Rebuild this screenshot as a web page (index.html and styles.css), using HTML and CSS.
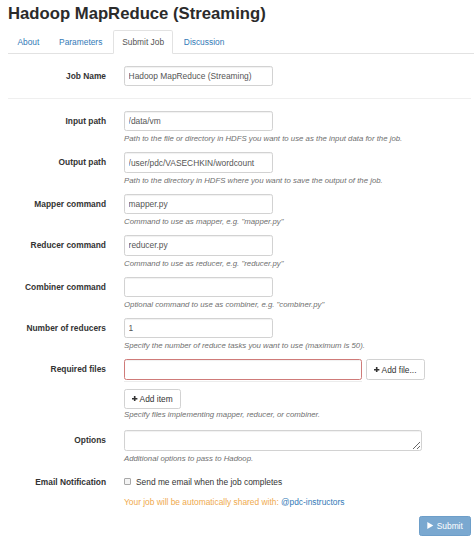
FILE: index.html
```
<!DOCTYPE html>
<html>
<head>
<meta charset="utf-8">
<link rel="stylesheet" href="styles.css">
</head>
<body>
<div class="page">
  <h1 class="title">Hadoop MapReduce (Streaming)</h1>
  <nav class="tabs">
    <a class="tab">About</a>
    <a class="tab">Parameters</a>
    <a class="tab active">Submit Job</a>
    <a class="tab">Discussion</a>
  </nav>
  <form class="form">
    <div class="group">
      <label class="label">Job Name</label>
      <div class="field"><input class="input" type="text" value="Hadoop MapReduce (Streaming)"></div>
    </div>
    <hr class="sep">
    <div class="group">
      <label class="label">Input path</label>
      <div class="field">
        <input class="input" type="text" value="/data/vm">
        <p class="help">Path to the file or directory in HDFS you want to use as the input data for the job.</p>
      </div>
    </div>
    <div class="group">
      <label class="label">Output path</label>
      <div class="field">
        <input class="input" type="text" value="/user/pdc/VASECHKIN/wordcount">
        <p class="help">Path to the directory in HDFS where you want to save the output of the job.</p>
      </div>
    </div>
    <div class="group">
      <label class="label">Mapper command</label>
      <div class="field">
        <input class="input" type="text" value="mapper.py">
        <p class="help">Command to use as mapper, e.g. "mapper.py"</p>
      </div>
    </div>
    <div class="group">
      <label class="label">Reducer command</label>
      <div class="field">
        <input class="input" type="text" value="reducer.py">
        <p class="help">Command to use as reducer, e.g. "reducer.py"</p>
      </div>
    </div>
    <div class="group">
      <label class="label">Combiner command</label>
      <div class="field">
        <input class="input" type="text" value="">
        <p class="help">Optional command to use as combiner, e.g. "combiner.py"</p>
      </div>
    </div>
    <div class="group">
      <label class="label">Number of reducers</label>
      <div class="field">
        <input class="input" type="text" value="1">
        <p class="help">Specify the number of reduce tasks you want to use (maximum is 50).</p>
      </div>
    </div>
    <div class="group group-files">
      <label class="label">Required files</label>
      <div class="field">
        <div class="file-row">
          <div class="file-col">
            <input class="input input-error" type="text" value="">
            <div class="progress-line"></div>
          </div>
          <button type="button" class="btn"><svg class="plus" viewBox="0 0 6 6"><path d="M2.1 0h1.8v2.1H6v1.8H3.9V6H2.1V3.9H0V2.1h2.1z"/></svg>Add file...</button>
        </div>
        <button type="button" class="btn btn-add"><svg class="plus" viewBox="0 0 6 6"><path d="M2.1 0h1.8v2.1H6v1.8H3.9V6H2.1V3.9H0V2.1h2.1z"/></svg>Add item</button>
        <p class="help help-flush">Specify files implementing mapper, reducer, or combiner.</p>
      </div>
    </div>
    <div class="group">
      <label class="label">Options</label>
      <div class="field">
        <textarea class="input textarea"></textarea>
        <p class="help">Additional options to pass to Hadoop.</p>
      </div>
    </div>
    <div class="group group-email">
      <label class="label">Email Notification</label>
      <div class="field check-field">
        <span class="checkbox"></span><span>Send me email when the job completes</span>
      </div>
    </div>
    <div class="group group-share">
      <span></span>
      <div class="field share">Your job will be automatically shared with: <a class="link">@pdc-instructors</a></div>
    </div>
    <div class="actions">
      <button type="button" class="btn btn-submit"><svg class="play" viewBox="0 0 6 7"><path d="M0 0L6 3.5L0 7z"/></svg>Submit</button>
    </div>
  </form>
</div>
</body>
</html>
```
FILE: styles.css
```
* { box-sizing: border-box; }
html, body { margin: 0; padding: 0; background: #fff; }
body {
  font-family: "Liberation Sans", Arial, Helvetica, sans-serif;
  font-size: 8.4px;
  line-height: 12px;
  color: #333;
}
.page { padding: 0 3px 0 8px; }
.title {
  font-size: 16.7px;
  line-height: 19px;
  font-weight: bold;
  color: #2b2b2b;
  margin: 4px 0 7px 0;
}
.tabs {
  display: flex;
  border-bottom: 1px solid #e2e2e2;
  margin-right: -3px;
  height: 24px;
}
.tab {
  display: block;
  padding: 5px 8.4px;
  line-height: 12px;
  border: 1px solid transparent;
  border-radius: 2.4px 2.4px 0 0;
  margin-right: 1px;
  margin-bottom: -1px;
  color: #337ab7;
  height: 24px;
}
.tab.active {
  background: #fff;
  border-color: #e2e2e2;
  border-bottom-color: #fff;
  color: #555;
}
.form { padding-top: 12px; }
.group {
  display: grid;
  grid-template-columns: 98px 1fr;
  column-gap: 18px;
  margin-bottom: 8px;
}
.label {
  text-align: right;
  font-weight: bold;
  padding-top: 4px;
  line-height: 12px;
  color: #333;
}
.field { min-width: 0; }
.input {
  display: block;
  width: 149px;
  height: 20.4px;
  margin: 0;
  padding: 0 3.6px;
  border: 1px solid #d2d2d2;
  border-radius: 2.4px;
  box-shadow: inset 0 1px 1px rgba(0,0,0,.06);
  font-family: inherit;
  font-size: 8.4px;
  color: #555;
  background: #fff;
  outline: none;
}
.sep {
  border: 0;
  border-top: 1px solid #efefef;
  margin: 11.6px 0 12px 0;
  height: 0;
}
.group:first-child { margin-bottom: 0; }
.help {
  margin: 2px 0 0 0;
  font-size: 7.8px;
  line-height: 11px;
  font-style: italic;
  color: #6f6f6f;
}
.help-flush { margin-top: 0; }
.file-row {
  display: flex;
  gap: 4px;
  align-items: flex-start;
}
.file-col { width: 238px; }
.input-error {
  width: 238px;
  border-color: #cf7b79;
}
.progress-line {
  height: 1px;
  margin-top: 1.4px;
  background: #ececec;
}
.btn {
  display: inline-flex;
  align-items: center;
  height: 20.4px;
  padding: 0 7.2px;
  border: 1px solid #d2d2d2;
  border-radius: 2.4px;
  background: #fff;
  font-family: inherit;
  font-size: 8.4px;
  color: #333;
  margin: 0;
  white-space: nowrap;
}
.plus {
  width: 5.4px;
  height: 5.4px;
  fill: #333;
  margin-right: 2px;
}
.btn-add { margin-top: 6.5px; height: 20px; }
.group-files { margin-bottom: 10.7px; }
.textarea {
  width: 298px;
  resize: vertical;
  padding: 3px 3.6px;
}
.check-field {
  padding-top: 4px;
  display: flex;
  align-items: center;
  line-height: 12px;
}
.checkbox {
  display: inline-block;
  width: 6.5px;
  height: 6.5px;
  border: 1px solid #a8a8a8;
  border-radius: 1px;
  background: #f4f4f4;
  margin-right: 5.5px;
}
.group-email { margin-bottom: 8.3px; }
.share { color: #efaa4d; line-height: 12px; }
.link { color: #337ab7; }
.actions {
  display: flex;
  justify-content: flex-end;
  padding-top: 0;
}
.btn-submit {
  height: 20px;
  background: #7aa8d0;
  border-color: #6d9ec9;
  color: #fff;
  padding: 0 7.2px;
}
.play {
  width: 6.6px;
  height: 7px;
  fill: #fff;
  margin-right: 3px;
}
```
